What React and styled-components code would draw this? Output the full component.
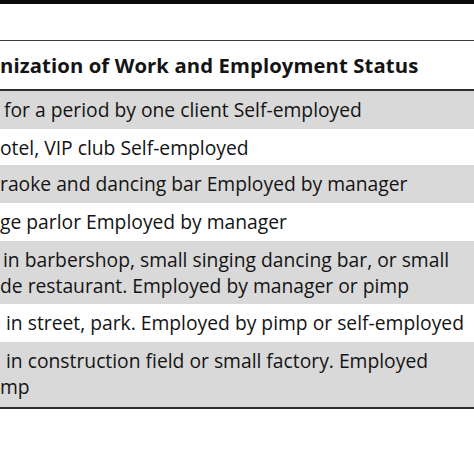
import React from 'react'
import styled, { createGlobalStyle } from 'styled-components'

const GlobalStyle = createGlobalStyle`
  html, body { margin: 0; padding: 0; background: #fff; }
  body { font-family: "Open Sans", "Liberation Sans", sans-serif; color: #141414; }
`

const rows = [
  { lines: ['for a period by one client Self-employed'], indent: 4, height: 38 },
  { lines: ['otel, VIP club Self-employed'], indent: -2, height: 36 },
  { lines: ['raoke and dancing bar Employed by manager'], indent: -1, height: 38 },
  { lines: ['ge parlor Employed by manager'], indent: -1, height: 38 },
  { lines: ['in barbershop, small singing dancing bar, or small', 'de restaurant. Employed by manager or pimp'], indent: 3, hang: -1, height: 63 },
  { lines: ['in street, park. Employed by pimp or self-employed'], indent: 6, height: 38 },
  { lines: ['in construction field or small factory. Employed', 'mp'], indent: 6, hang: -2, height: 65 },
]

const Page = styled.div`
  width: 474px;
  height: 474px;
  overflow: hidden;
  background: #fff;
`

const TopRule = styled.div`
  height: 4px;
  background: #0a0a0a;
`

const Caption = styled.div`
  height: 36px;
  border-bottom: 1px solid #3a3a3a;
`

const Header = styled.div`
  height: 48px;
  display: flex;
  align-items: center;
  font-weight: 700;
  font-size: 20.3px;
  letter-spacing: 0.1px;
  border-bottom: 2px solid #2e2e2e;
  white-space: nowrap;
`

const Body = styled.div`
  border-bottom: 2px solid #2e2e2e;
`

const Row = styled.div`
  box-sizing: border-box;
  height: ${p => p.$height}px;
  background: ${p => (p.$shaded ? '#d9d9d9' : '#fff')};
  padding-top: 6px;
  font-size: 19.3px;
  line-height: 26px;
  white-space: nowrap;
`

const Line = styled.div`
  padding-left: ${p => p.$indent}px;
`

export default function App() {
  return (
    <Page>
      <GlobalStyle />
      <TopRule />
      <Caption />
      <Header>nization of Work and Employment Status</Header>
      <Body>
        {rows.map((r, i) => (
          <Row key={i} $shaded={i % 2 === 0} $height={r.height}>
            {r.lines.map((l, j) => (
              <Line key={j} $indent={j === 0 ? r.indent : r.hang}>{l}</Line>
            ))}
          </Row>
        ))}
      </Body>
    </Page>
  )
}
